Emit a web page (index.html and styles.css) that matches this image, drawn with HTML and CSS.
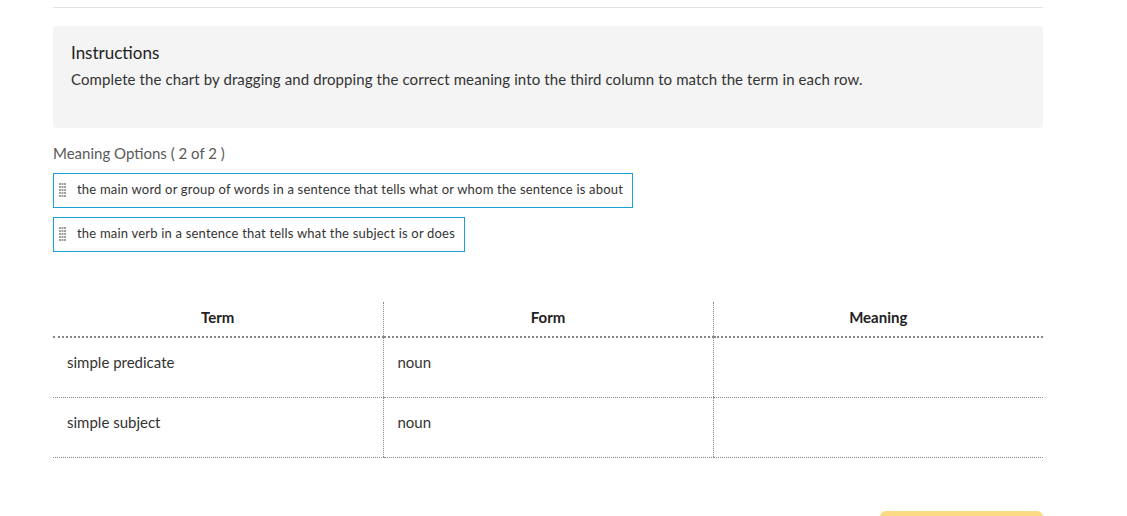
FILE: index.html
```html
<!DOCTYPE html>
<html>
<head>
  <title>Term Chart</title>
  <link rel="stylesheet" href="styles.css">
</head>
<body>
  <div class="page">
    <hr class="top-rule">

    <div class="instructions">
      <h3>Instructions</h3>
      <p>Complete the chart by dragging and dropping the correct meaning into the third column to match the term in each row.</p>
    </div>

    <div class="options">
      <div class="options-title">Meaning Options ( 2 of 2 )</div>
      <div class="option">
        <svg class="handle" width="7" height="15" viewBox="0 0 7 15">
          <g fill="#a0a0a0">
            <rect x="0" y="0" width="2" height="2"/><rect x="2.5" y="0" width="2" height="2"/><rect x="5" y="0" width="2" height="2"/>
            <rect x="0" y="3" width="2" height="2"/><rect x="2.5" y="3" width="2" height="2"/><rect x="5" y="3" width="2" height="2"/>
            <rect x="0" y="6" width="2" height="2"/><rect x="2.5" y="6" width="2" height="2"/><rect x="5" y="6" width="2" height="2"/>
            <rect x="0" y="9" width="2" height="2"/><rect x="2.5" y="9" width="2" height="2"/><rect x="5" y="9" width="2" height="2"/>
            <rect x="0" y="12" width="2" height="2"/><rect x="2.5" y="12" width="2" height="2"/><rect x="5" y="12" width="2" height="2"/>
          </g>
        </svg>
        <span>the main word or group of words in a sentence that tells what or whom the sentence is about</span>
      </div>
      <div class="option">
        <svg class="handle" width="7" height="15" viewBox="0 0 7 15">
          <g fill="#a0a0a0">
            <rect x="0" y="0" width="2" height="2"/><rect x="2.5" y="0" width="2" height="2"/><rect x="5" y="0" width="2" height="2"/>
            <rect x="0" y="3" width="2" height="2"/><rect x="2.5" y="3" width="2" height="2"/><rect x="5" y="3" width="2" height="2"/>
            <rect x="0" y="6" width="2" height="2"/><rect x="2.5" y="6" width="2" height="2"/><rect x="5" y="6" width="2" height="2"/>
            <rect x="0" y="9" width="2" height="2"/><rect x="2.5" y="9" width="2" height="2"/><rect x="5" y="9" width="2" height="2"/>
            <rect x="0" y="12" width="2" height="2"/><rect x="2.5" y="12" width="2" height="2"/><rect x="5" y="12" width="2" height="2"/>
          </g>
        </svg>
        <span>the main verb in a sentence that tells what the subject is or does</span>
      </div>
    </div>

    <table class="chart">
      <thead>
        <tr>
          <th>Term</th>
          <th>Form</th>
          <th>Meaning</th>
        </tr>
      </thead>
      <tbody>
        <tr>
          <td>simple predicate</td>
          <td>noun</td>
          <td></td>
        </tr>
        <tr>
          <td>simple subject</td>
          <td>noun</td>
          <td></td>
        </tr>
      </tbody>
    </table>

    <div class="footer">
      <button class="submit-btn"></button>
    </div>
  </div>
</body>
</html>
```

FILE: styles.css
```css
* {
  box-sizing: border-box;
}

body {
  margin: 0;
  font-family: Lato, "Open Sans", sans-serif;
  color: #333;
  background: #fff;
  height: 516px;
  overflow: hidden;
}

.page {
  width: 990px;
  margin-left: 53px;
  padding-top: 7px;
}

.top-rule {
  border: none;
  border-top: 1px solid #e2e2e2;
  margin: 0 0 18px 0;
}

.instructions {
  background: #f4f4f4;
  border-radius: 4px;
  padding: 16px 18px 0;
  height: 102px;
}

.instructions h3 {
  margin: 0 0 7px;
  font-size: 17px;
  font-weight: 400;
  color: #222;
}

.instructions p {
  margin: 0;
  font-size: 15px;
  letter-spacing: 0.1px;
  color: #333;
}

.options {
  margin-top: 16px;
  display: flex;
  flex-direction: column;
  align-items: flex-start;
  gap: 9px;
}

.options-title {
  font-size: 15px;
  color: #5a5a5a;
  margin-bottom: 2px;
}

.option {
  display: flex;
  align-items: center;
  gap: 11px;
  height: 35px;
  padding: 0 9px 4px 5px;
  border: 1px solid #1aa0d6;
  font-size: 13px;
  letter-spacing: 0.2px;
  color: #333;
  background: #fff;
}

.handle {
  display: block;
  margin-top: 4px;
}

.chart {
  margin-top: 50px;
  width: 990px;
  border-collapse: collapse;
  table-layout: fixed;
  font-size: 15px;
}

.chart th,
.chart td {
  width: 330px;
  border-left: 1px dotted #888;
}

.chart th:first-child,
.chart td:first-child {
  border-left: none;
}

.chart th {
  height: 35px;
  padding: 0 0 4px;
  font-weight: 700;
  color: #222;
  text-align: center;
  border-bottom: 2px dotted #888;
}

.chart td {
  height: 60px;
  padding: 15px 14px 0;
  border-bottom: 1px dotted #888;
  color: #333;
  vertical-align: top;
}

.footer {
  display: flex;
  justify-content: flex-end;
  margin-top: 53px;
}

.submit-btn {
  width: 163px;
  height: 30px;
  border: none;
  border-radius: 6px;
  background: #fcd983;
}
```
